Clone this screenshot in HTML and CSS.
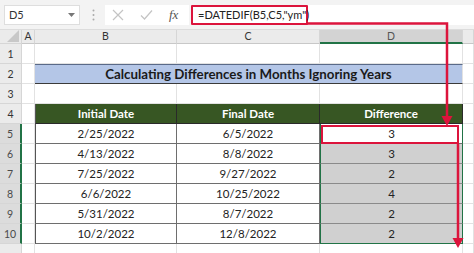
FILE: index.html
```html
<!DOCTYPE html>
<html lang="en">

<head>
    <meta charset="UTF-8">
    <meta name="viewport" content="width=device-width, initial-scale=1.0">
    <title>DATEDIF ym</title>
    <link rel="stylesheet" href="styles.css">
</head>

<body>
    <div class="toolbar">
        <div class="namebox">
            <span>D5</span>
            <svg class="caret" width="7" height="4" viewBox="0 0 7 4"><path d="M0 0 H7 L3.5 4 Z" fill="#777" /></svg>
        </div>
        <svg class="grip" width="3" height="12" viewBox="0 0 3 12">
            <circle cx="1.5" cy="1.5" r="1" fill="#aaa" />
            <circle cx="1.5" cy="6" r="1" fill="#aaa" />
            <circle cx="1.5" cy="10.5" r="1" fill="#aaa" />
        </svg>
        <div class="fx-buttons">
            <svg width="12" height="12" viewBox="0 0 12 12"><path d="M1 1 L11 11 M11 1 L1 11" stroke="#c4c4c4" stroke-width="1.2" /></svg>
            <svg width="13" height="12" viewBox="0 0 13 12"><path d="M1 6.5 L4.5 10 L12 1.5" stroke="#c4c4c4" stroke-width="1.2" fill="none" /></svg>
            <span class="fx">fx</span>
        </div>
        <div class="formula">
            <span class="formula-text">=DATEDIF(B5,C5,"ym")</span>
        </div>
    </div>

    <div class="sheet">
        <div class="corner"><svg width="12" height="12" viewBox="0 0 12 12"><path d="M12 0 V12 H0 Z" fill="#c8c8c8" /></svg></div>
        <div class="col-head">A</div>
        <div class="col-head">B</div>
        <div class="col-head">C</div>
        <div class="col-head picked">D</div>
        <div class="col-head"></div>

        <div class="row-head">1</div>
        <div class="cell"></div><div class="cell"></div><div class="cell"></div><div class="cell"></div><div class="cell"></div>

        <div class="row-head">2</div>
        <div class="cell"></div>
        <div class="cell title">Calculating Differences in Months Ignoring Years</div>
        <div class="cell"></div>

        <div class="row-head">3</div>
        <div class="cell"></div><div class="cell"></div><div class="cell"></div><div class="cell"></div><div class="cell"></div>

        <div class="row-head">4</div>
        <div class="cell"></div>
        <div class="cell th first">Initial Date</div>
        <div class="cell th">Final Date</div>
        <div class="cell th">Difference</div>
        <div class="cell"></div>

        <div class="row-head picked">5</div>
        <div class="cell"></div>
        <div class="cell td first">2/25/2022</div>
        <div class="cell td">6/5/2022</div>
        <div class="cell td active">3</div>
        <div class="cell"></div>

        <div class="row-head picked">6</div>
        <div class="cell"></div>
        <div class="cell td first">4/13/2022</div>
        <div class="cell td">8/8/2022</div>
        <div class="cell td sel">3</div>
        <div class="cell"></div>

        <div class="row-head picked">7</div>
        <div class="cell"></div>
        <div class="cell td first">7/25/2022</div>
        <div class="cell td">9/27/2022</div>
        <div class="cell td sel">2</div>
        <div class="cell"></div>

        <div class="row-head picked">8</div>
        <div class="cell"></div>
        <div class="cell td first">6/6/2022</div>
        <div class="cell td">10/25/2022</div>
        <div class="cell td sel">4</div>
        <div class="cell"></div>

        <div class="row-head picked">9</div>
        <div class="cell"></div>
        <div class="cell td first">5/31/2022</div>
        <div class="cell td">8/7/2022</div>
        <div class="cell td sel">2</div>
        <div class="cell"></div>

        <div class="row-head picked">10</div>
        <div class="cell"></div>
        <div class="cell td first">10/2/2022</div>
        <div class="cell td">12/8/2022</div>
        <div class="cell td sel last">2</div>
        <div class="cell"></div>

        <div class="row-head"></div>
        <div class="cell"></div><div class="cell"></div><div class="cell"></div><div class="cell"></div><div class="cell"></div>
    </div>

    <!-- callout drawn over the sheet -->
    <div class="box-d5"></div>
    <svg class="arrows" width="474" height="253" viewBox="0 0 474 253">
        <path d="M306 23.5 H447 V118" stroke="#dc143c" stroke-width="2.5" fill="none" />
        <path d="M441.5 116 H452.5 L447 126 Z" fill="#dc143c" />
        <path d="M458 144 V240" stroke="#dc143c" stroke-width="2.5" fill="none" />
        <path d="M452.5 238 H463.5 L458 248 Z" fill="#dc143c" />
    </svg>
</body>

</html>
```

FILE: styles.css
```css
body {
    margin: 0;
    width: 474px;
    height: 253px;
    overflow: hidden;
    background-color: #fff;
    font-family: Lato, "Liberation Sans", sans-serif;
    color: #222;
    position: relative;
}

.toolbar {
    height: 30px;
    background-color: #f3f3f3;
    display: flex;
    align-items: center;
    padding-left: 4px;
    box-sizing: border-box;
    border-bottom: 1px solid #dcdcdc;
}

.namebox {
    width: 76px;
    height: 20px;
    background-color: #fff;
    border: 1px solid #dedede;
    box-sizing: border-box;
    display: flex;
    align-items: center;
    justify-content: space-between;
    padding: 0 4px 0 4px;
    font-size: 11px;
    color: #333;
}

.grip {
    margin: 0 10px 0 12px;
}

.fx-buttons {
    width: 84px;
    height: 20px;
    background-color: #fff;
    display: flex;
    align-items: center;
    gap: 16px;
    padding-left: 7px;
    box-sizing: border-box;
}

.fx {
    font-family: "Liberation Serif", serif;
    font-style: italic;
    font-size: 13px;
    color: #555;
}

.formula {
    flex: 1;
    height: 20px;
    margin-left: 2px;
    background-color: #fff;
    display: flex;
}

.formula-text {
    border: 2.5px solid #dc143c;
    border-radius: 1px;
    box-sizing: border-box;
    width: 117px;
    height: 20px;
    padding-left: 5px;
    font-size: 11px;
    line-height: 15px;
    color: #222;
}

.sheet {
    display: grid;
    grid-template-columns: 22px 13px 142px 143px 143px 1fr;
    grid-template-rows: 14px repeat(10, 20px) 20px;
}

.corner {
    background-color: #ebebeb;
    border-right: 1px solid #d6d6d6;
    border-bottom: 1px solid #d6d6d6;
    display: flex;
    align-items: flex-end;
    justify-content: flex-end;
    padding: 0 2px 1px 0;
    box-sizing: border-box;
}

.col-head {
    background-color: #ebebeb;
    border-right: 1px solid #d6d6d6;
    border-bottom: 1px solid #c8c8c8;
    box-sizing: border-box;
    font-size: 10.5px;
    line-height: 13px;
    text-align: center;
    color: #333;
}

.col-head.picked {
    background-color: #d3d3d3;
    border-bottom: 2px solid #217346;
    color: #555;
}

.row-head {
    background-color: #ebebeb;
    border-right: 1px solid #d6d6d6;
    border-bottom: 1px solid #d6d6d6;
    box-sizing: border-box;
    font-size: 10.5px;
    line-height: 20px;
    text-align: center;
    color: #333;
}

.row-head.picked {
    background-color: #dcdcdc;
    border-right: 2px solid #217346;
    color: #4a4a4a;
}

.cell {
    border-right: 1px solid #e2e2e2;
    border-bottom: 1px solid #e2e2e2;
    box-sizing: border-box;
    font-size: 11.5px;
    text-align: center;
    line-height: 19px;
}

.title {
    grid-column: span 3;
    background-color: #b4c6e7;
    border-top: 1px solid #5a6a88;
    border-bottom: 1px solid #3a3a3a;
    font-weight: bold;
    font-size: 13.3px;
    color: #1a1a1a;
    line-height: 18px;
}

.th {
    background-color: #375623;
    color: #fff;
    font-weight: bold;
    font-size: 11.5px;
    border-right: 1px solid #2a2a2a;
    border-bottom: 1px solid #2a2a2a;
}

.td {
    border-right: 1px solid #6e6e6e;
    border-bottom: 1px solid #6e6e6e;
    color: #222;
}

.first {
    border-left: 1px solid #555;
}

.active {
    border-left: 1px solid #217346;
    border-right: 1px solid #217346;
}

.sel {
    background-color: #d0d0d0;
    border-left: 1px solid #217346;
    border-right: 1px solid #217346;
    border-bottom-color: #8a8a8a;
}

.sel.last {
    border-bottom: 1px solid #217346;
}

.box-d5 {
    position: absolute;
    left: 321px;
    top: 125px;
    width: 138px;
    height: 19px;
    border: 2px solid #dc143c;
    box-sizing: border-box;
}

.arrows {
    position: absolute;
    left: 0;
    top: 0;
}
```
